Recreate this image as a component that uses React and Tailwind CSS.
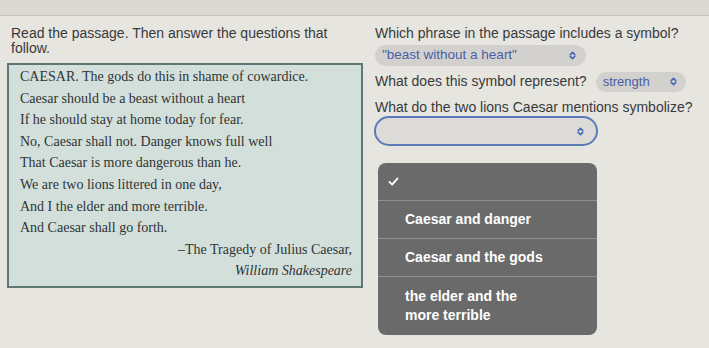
import React from "react";

const Chevrons = ({ className }) => (
  <svg viewBox="0 0 10 12" className={className} fill="none" stroke="currentColor" strokeWidth="1.8" strokeLinecap="round" strokeLinejoin="round">
    <path d="M2.5 5 L5 2.5 L7.5 5" />
    <path d="M2.5 7 L5 9.5 L7.5 7" />
  </svg>
);

const passage = [
  "CAESAR. The gods do this in shame of cowardice.",
  "Caesar should be a beast without a heart",
  "If he should stay at home today for fear.",
  "No, Caesar shall not. Danger knows full well",
  "That Caesar is more dangerous than he.",
  "We are two lions littered in one day,",
  "And I the elder and more terrible.",
  "And Caesar shall go forth.",
];

const options = ["Caesar and danger", "Caesar and the gods"];

export default function App() {
  return (
    <div className="w-[709px] h-[348px] overflow-hidden bg-[#e7e5e0] font-['Liberation_Sans',Arial,sans-serif] text-[#383a3a]">
      <div className="h-[16px] bg-[#dcd9d2] border-b border-[#c4c1ba]" />

      <div className="flex">
        {/* left column */}
        <div className="w-[366px] pl-[7px] pt-[10px]">
          <p className="ml-[4px] text-[14px] leading-[15px] pr-[30px]">
            Read the passage. Then answer the questions that follow.
          </p>
          <div className="mt-[7px] w-[356px] border-2 border-[#5d7774] bg-[#d3dfdb] pl-[11px] pr-[9px] pt-[1px] pb-[4px] font-['Liberation_Serif','Times_New_Roman',serif] text-[14px] leading-[21.6px] text-[#2f3434]">
            {passage.map((line) => (
              <div key={line}>{line}</div>
            ))}
            <div className="text-right">–The Tragedy of Julius Caesar,</div>
            <div className="text-right italic">William Shakespeare</div>
          </div>
        </div>

        {/* right column */}
        <div className="pl-[9px] pt-[10px] flex-1">
          <p className="text-[14px] leading-[15px]">Which phrase in the passage includes a symbol?</p>

          <div className="mt-[4px] w-[211px] h-[21px] rounded-full bg-[#d3d1cd] flex items-center justify-between pl-[7px] pr-[9px] text-[13.5px] text-[#4a5ea6]">
            <span>"beast without a heart"</span>
            <Chevrons className="w-[9px] h-[11px] text-[#4a66b8]" />
          </div>

          <div className="mt-[5px] flex items-center">
            <span className="text-[14px]">What does this symbol represent?</span>
            <div className="ml-[9px] w-[90px] h-[20px] rounded-full bg-[#d3d1cd] flex items-center justify-between pl-[7px] pr-[8px] text-[13px] text-[#4a5ea6]">
              <span>strength</span>
              <Chevrons className="w-[9px] h-[11px] text-[#4a66b8]" />
            </div>
          </div>

          <p className="mt-[8px] text-[14px] leading-[15px]">What do the two lions Caesar mentions symbolize?</p>

          <div className="mt-[1px] -ml-[1px] w-[224px] h-[30px] rounded-full border-2 border-[#5b7bb8] bg-[#dddbd7] flex items-center justify-end pr-[11px]">
            <Chevrons className="w-[9px] h-[11px] text-[#4a66b8]" />
          </div>

          <div className="mt-[17px] ml-[3px] w-[219px] rounded-[8px] bg-[#6a6a6a] text-white font-bold text-[14px] overflow-hidden">
            <div className="h-[38px] flex items-center pl-[10px] border-b border-[#8f8f8f]">
              <svg viewBox="0 0 12 10" className="w-[11px] h-[9px]" fill="none" stroke="white" strokeWidth="2" strokeLinecap="round" strokeLinejoin="round">
                <path d="M1.5 5.5 L4.5 8.5 L10.5 1.5" />
              </svg>
            </div>
            {options.map((o) => (
              <div key={o} className="h-[38px] flex items-center pl-[27px] border-b border-[#8f8f8f]">
                {o}
              </div>
            ))}
            <div className="h-[58px] flex items-center pl-[27px] leading-[19px]">
              the elder and the
              <br />
              more terrible
            </div>
          </div>
        </div>
      </div>
    </div>
  );
}
